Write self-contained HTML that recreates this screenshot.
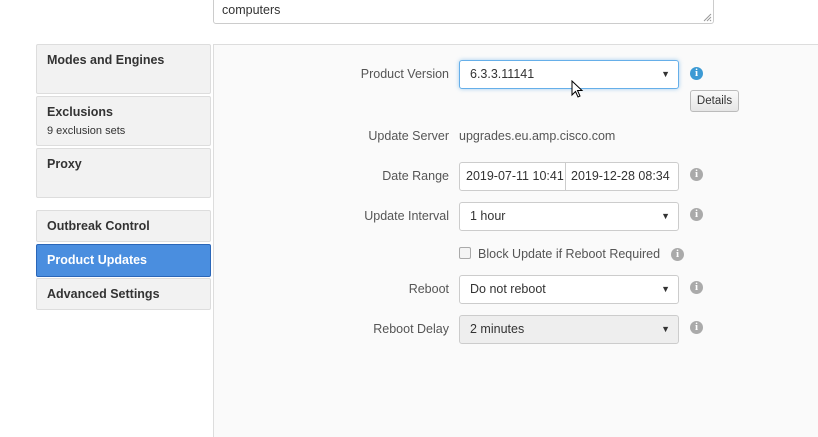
<!DOCTYPE html>
<html style="width:818px;height:437px;overflow:hidden"><head><style>
*{box-sizing:border-box;margin:0;padding:0}
body{width:818px;height:437px;overflow:hidden;background:#fff;font-family:"Liberation Sans",sans-serif;font-size:12.5px;color:#333;position:relative}
.a{position:absolute}
.side{left:36px;width:175px;background:#f2f2f2;border:1px solid #ddd;border-radius:2px;padding:8px 10px;font-weight:bold;font-size:12.5px;color:#333}
.side small{display:block;font-weight:normal;font-size:11px;margin-top:6px}
.lbl{right:369px;color:#555;text-align:right;font-size:12.5px}
.ctl{left:459px;width:220px;height:29px;border:1px solid #ccc;border-radius:3px;background:#fff;padding:0 10px;line-height:27px;color:#333}
.ctl .ar{position:absolute;right:8px;top:0;font-size:9px}
.info{width:13px;height:13px;border-radius:50%;background:#aaa;color:#fff;font-size:11px;font-weight:bold;text-align:center;line-height:13px;font-family:"Liberation Serif",serif}
</style></head><body>
<div class="a" style="left:213px;top:-6px;width:501px;height:30px;border:1px solid #ccc;border-radius:3px;padding:8px 8px 0;color:#333">computers</div>
<svg class="a" style="left:703px;top:13px" width="9" height="9"><path d="M8 1L1 8M8 4L4 8M8 7L7 8" stroke="#999" stroke-width="1"/></svg>
<div class="a" style="left:213px;top:44px;width:605px;height:393px;background:#fafafa;border:1px solid #ddd;border-right:none;border-bottom:none"></div>

<div class="a side" style="top:44px;height:50px">Modes and Engines</div>
<div class="a side" style="top:96px;height:50px">Exclusions<small>9 exclusion sets</small></div>
<div class="a side" style="top:148px;height:50px">Proxy</div>
<div class="a side" style="top:210px;height:32px">Outbreak Control</div>
<div class="a side" style="top:244px;height:33px;background:#4a8edf;border-color:#2a66b8;color:#fff">Product Updates</div>
<div class="a side" style="top:278px;height:32px">Advanced Settings</div>

<div class="a lbl" style="top:67px">Product Version</div>
<div class="a ctl" style="top:60px;border-color:#66afe9;box-shadow:0 0 4px rgba(102,175,233,.6)">6.3.3.11141<span class="ar">▼</span></div>
<div class="a info" style="left:690px;top:67px;background:#3c9ad4">i</div>
<div class="a" style="left:690px;top:90px;width:49px;height:22px;border:1px solid #bbb;border-radius:3px;background:linear-gradient(#fafafa,#e6e6e6);font-size:11.5px;text-align:center;line-height:20px">Details</div>

<div class="a lbl" style="top:129px">Update Server</div>
<div class="a" style="left:459px;top:129px;color:#555">upgrades.eu.amp.cisco.com</div>

<div class="a lbl" style="top:169px">Date Range</div>
<div class="a ctl" style="top:162px;padding:0 6px">2019-07-11 10:41</div>
<div class="a" style="left:565px;top:162px;width:1px;height:29px;background:#ccc"></div>
<div class="a" style="left:571px;top:162px;line-height:29px">2019-12-28 08:34</div>
<div class="a info" style="left:690px;top:168px">i</div>

<div class="a lbl" style="top:209px">Update Interval</div>
<div class="a ctl" style="top:202px">1 hour<span class="ar">▼</span></div>
<div class="a info" style="left:690px;top:208px">i</div>

<div class="a" style="left:459px;top:247px;width:12px;height:12px;border:1px solid #aaa;border-radius:2px;background:#f4f4f4"></div>
<div class="a" style="left:478px;top:247px;color:#555">Block Update if Reboot Required</div>
<div class="a info" style="left:671px;top:248px">i</div>

<div class="a lbl" style="top:282px">Reboot</div>
<div class="a ctl" style="top:275px">Do not reboot<span class="ar">▼</span></div>
<div class="a info" style="left:690px;top:281px">i</div>

<div class="a lbl" style="top:322px">Reboot Delay</div>
<div class="a ctl" style="top:315px;background:#eee">2 minutes<span class="ar">▼</span></div>
<div class="a info" style="left:690px;top:321px">i</div>

<svg class="a" style="left:571px;top:80px" width="14" height="20" viewBox="0 0 14 20"><path d="M1 1 L1 15 L4.5 11.5 L7 17 L9 16 L6.5 10.5 L11 10.5 Z" fill="#fff" stroke="#000" stroke-width="1"/></svg>
</body></html>
